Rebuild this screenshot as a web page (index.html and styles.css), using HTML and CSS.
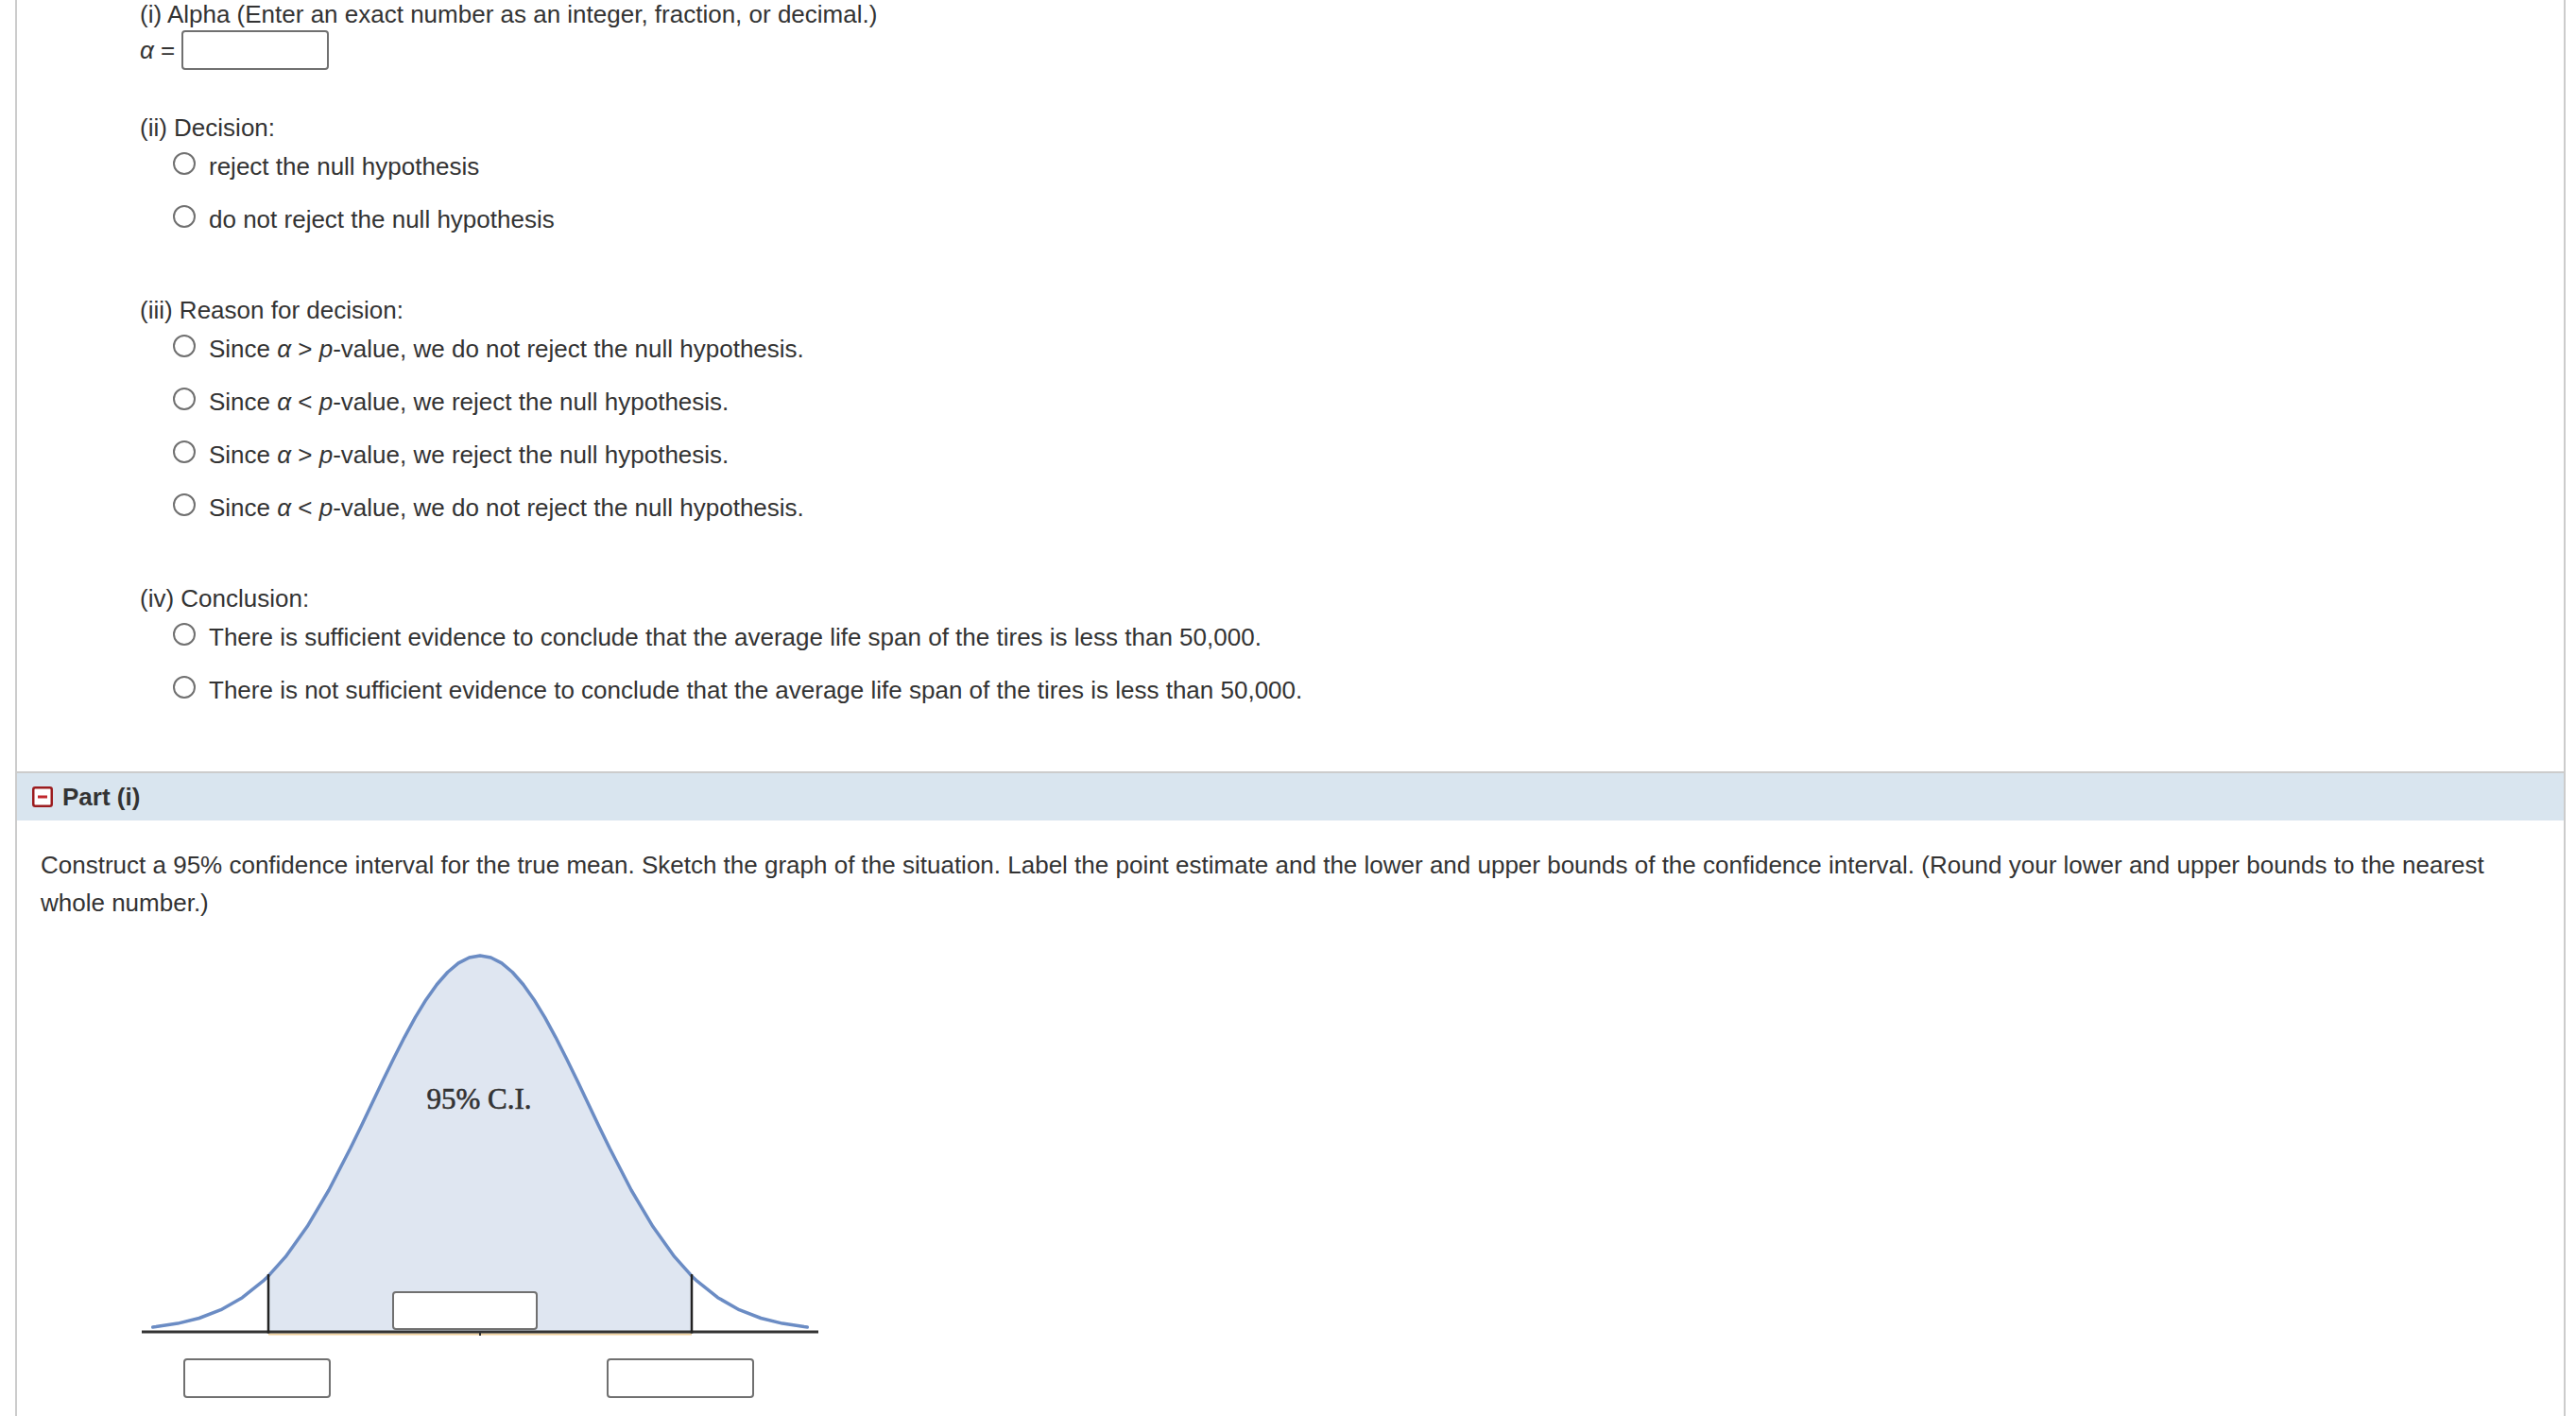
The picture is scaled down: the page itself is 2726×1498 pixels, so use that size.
FILE: index.html
```html
<!DOCTYPE html>
<html lang="en">
<head>
<meta charset="utf-8">
<title>Hypothesis test</title>
<link rel="stylesheet" href="styles.css">
</head>
<body>
<div class="frame">
  <section class="sub">
    <div class="q">
      <div class="q-label">(i) Alpha (Enter an exact number as an integer, fraction, or decimal.)</div>
      <div class="answer-row"><i class="var">α</i>&nbsp;=&nbsp;<input class="field" type="text"></div>
    </div>
    <div class="q">
      <div class="q-label">(ii) Decision:</div>
      <div class="q-opts">
        <div class="opt"><span class="radio"></span><span>reject the null hypothesis</span></div>
        <div class="opt"><span class="radio"></span><span>do not reject the null hypothesis</span></div>
      </div>
    </div>
    <div class="q">
      <div class="q-label">(iii) Reason for decision:</div>
      <div class="q-opts">
        <div class="opt"><span class="radio"></span><span>Since <i>α</i> &gt; <i>p</i>-value, we do not reject the null hypothesis.</span></div>
        <div class="opt"><span class="radio"></span><span>Since <i>α</i> &lt; <i>p</i>-value, we reject the null hypothesis.</span></div>
        <div class="opt"><span class="radio"></span><span>Since <i>α</i> &gt; <i>p</i>-value, we reject the null hypothesis.</span></div>
        <div class="opt"><span class="radio"></span><span>Since <i>α</i> &lt; <i>p</i>-value, we do not reject the null hypothesis.</span></div>
      </div>
    </div>
    <div class="q">
      <div class="q-label">(iv) Conclusion:</div>
      <div class="q-opts">
        <div class="opt"><span class="radio"></span><span>There is sufficient evidence to conclude that the average life span of the tires is less than 50,000.</span></div>
        <div class="opt"><span class="radio"></span><span>There is not sufficient evidence to conclude that the average life span of the tires is less than 50,000.</span></div>
      </div>
    </div>
  </section>

  <div class="part-head">
    <svg class="toggle" width="22" height="22" viewBox="0 0 22 22">
      <rect x="1.25" y="1.25" width="19.5" height="19.5" rx="2" fill="#ffffff" stroke="#9b1c1f" stroke-width="2.5"/>
      <rect x="6" y="9.5" width="10" height="3" fill="#c0282d"/>
    </svg>
    <span class="part-title">Part (i)</span>
  </div>

  <div class="part-body">
    <p class="prompt">Construct a 95% confidence interval for the true mean. Sketch the graph of the situation. Label the point estimate and the lower and upper bounds of the confidence interval. (Round your lower and upper bounds to the nearest whole number.)</p>
    <div class="graph">
      <svg class="curve" width="740" height="510" viewBox="0 0 740 510">
        <g transform="translate(0,1)">
          <path class="ci-fill" d="M144,418 L144,359.9 L162.3,339.4 L185.1,307.6 L208,269 L230.8,224.8 L242.3,201.2 L253.7,177.2 L265.1,153.2 L276.6,129.7 L288,107.3 L299.4,86.4 L310.8,67.7 L322.3,51.5 L333.7,38.5 L345.1,28.9 L356.6,23 L368,21 L379.4,23 L390.9,28.9 L402.3,38.5 L413.7,51.5 L425.2,67.7 L436.6,86.4 L448,107.3 L459.4,129.7 L470.9,153.2 L482.3,177.2 L493.7,201.2 L505.2,224.8 L528,269 L550.9,307.6 L573.7,339.4 L592,359.9 L592,418 Z"/>
          <path class="bell" d="M21.7,414 L25.1,413.6 L48,410.1 L70.8,404.5 L93.7,395.7 L116.5,382.7 L139.4,364.3 L144,359.9 L162.3,339.4 L185.1,307.6 L208,269 L230.8,224.8 L242.3,201.2 L253.7,177.2 L265.1,153.2 L276.6,129.7 L288,107.3 L299.4,86.4 L310.8,67.7 L322.3,51.5 L333.7,38.5 L345.1,28.9 L356.6,23 L368,21 L379.4,23 L390.9,28.9 L402.3,38.5 L413.7,51.5 L425.2,67.7 L436.6,86.4 L448,107.3 L459.4,129.7 L470.9,153.2 L482.3,177.2 L493.7,201.2 L505.2,224.8 L528,269 L550.9,307.6 L573.7,339.4 L592,359.9 L596.6,364.3 L619.5,382.7 L642.3,395.7 L665.2,404.5 L688,410.1 L710.9,413.6 L714.3,414"/>
        </g>
        <line class="ci-base" x1="144" y1="422.5" x2="592" y2="422.5"/>
        <line class="axis" x1="10" y1="420" x2="726" y2="420"/>
        <line class="bound" x1="144" y1="359" x2="144" y2="421.5"/>
        <line class="bound" x1="592" y1="359" x2="592" y2="421.5"/>
        <line class="tick" x1="368" y1="420" x2="368" y2="424"/>
        <text class="ci-label" x="367" y="184" text-anchor="middle">95% C.I.</text>
      </svg>
      <input class="field field-mid" type="text">
      <input class="field field-low" type="text">
      <input class="field field-high" type="text">
    </div>
  </div>
</div>
</body>
</html>
```

FILE: styles.css
```css
html, body {
  margin: 0;
  padding: 0;
  background: #ffffff;
}

body {
  font-family: "Liberation Sans", Arial, Helvetica, sans-serif;
  font-size: 26px;
  color: #333333;
}

.frame {
  margin: 0 11px 0 16px;
  border-left: 2px solid #cccccc;
  border-right: 2px solid #cccccc;
  min-height: 1498px;
  box-sizing: border-box;
}

.sub {
  padding: 0 0 51px 130px;
}

.q {
  display: flow-root;
}

.q + .q {
  margin-top: 46px;
}

.q-label {
  line-height: 30px;
}

.answer-row {
  display: flex;
  align-items: center;
  height: 42px;
  margin-top: 2px;
  line-height: 30px;
}

.var {
  font-style: italic;
}

.field {
  box-sizing: border-box;
  width: 156px;
  height: 42px;
  margin: 0;
  padding: 0 8px;
  border: 2px solid #707070;
  border-radius: 4px;
  background: #ffffff;
  font: inherit;
  outline: none;
}

.q-opts {
  display: flex;
  flex-direction: column;
  gap: 26px;
  margin-top: 11px;
  padding-bottom: 20px;
  padding-left: 35px;
}

.opt {
  display: flex;
  align-items: center;
  line-height: 30px;
}

.radio {
  flex: none;
  box-sizing: border-box;
  width: 24px;
  height: 24px;
  border: 2px solid #707070;
  border-radius: 50%;
  background: #ffffff;
  margin-right: 14px;
  margin-bottom: 6px;
}

.part-head {
  display: flex;
  align-items: center;
  height: 50px;
  border-top: 2px solid #cccccc;
  background: #d9e5ef;
  padding-left: 16px;
}

.toggle {
  display: block;
  flex: none;
  margin-right: 10px;
}

.part-title {
  font-weight: bold;
  line-height: 30px;
  color: #333333;
}

.part-body {
  padding: 27px 25px 0 25px;
}

.prompt {
  margin: 0;
  line-height: 40px;
}

.graph {
  position: relative;
  width: 740px;
  height: 510px;
  margin: 14px 0 0 97px;
}

.curve {
  display: block;
}

.ci-fill {
  fill: #dfe6f1;
  stroke: none;
}

.bell {
  fill: none;
  stroke: #6b8cc4;
  stroke-width: 3.5;
  stroke-linejoin: round;
  stroke-linecap: round;
}

.axis {
  stroke: #333333;
  stroke-width: 3;
}

.ci-base {
  stroke: #efcf9b;
  stroke-width: 2;
}

.bound {
  stroke: #222222;
  stroke-width: 2.5;
}

.tick {
  stroke: #333333;
  stroke-width: 2;
}

.ci-label {
  font-family: "Liberation Serif", "Times New Roman", serif;
  font-size: 31px;
  fill: #333333;
  stroke: #333333;
  stroke-width: 0.6;
}

.field-mid {
  position: absolute;
  left: 275px;
  top: 377px;
  width: 154px;
  height: 41px;
}

.field-low {
  position: absolute;
  left: 54px;
  top: 448px;
}

.field-high {
  position: absolute;
  left: 502px;
  top: 448px;
}
```
